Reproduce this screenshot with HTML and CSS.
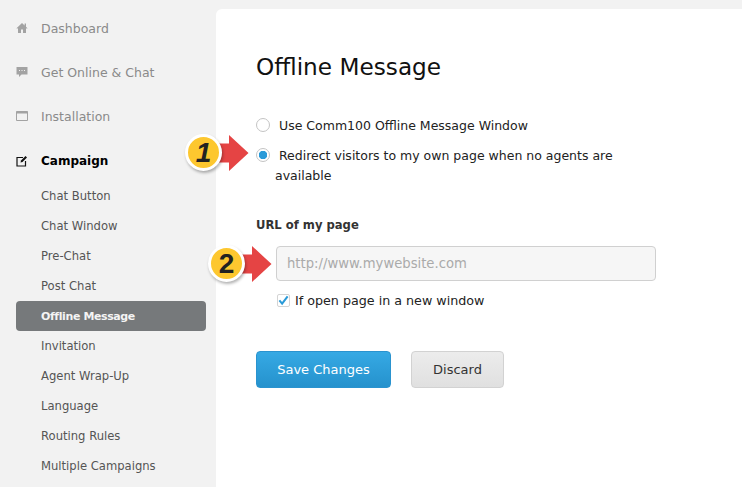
FILE: index.html
```html
<!DOCTYPE html>
<html lang="en">
  <head>
    <meta charset="UTF-8" />
    <meta name="viewport" content="width=device-width, initial-scale=1.0" />
    <title>Offline Message</title>
    <link rel="stylesheet" href="styles.css">
  </head>
  <body>
    <div class="page">
      <nav class="sidebar">
        <a class="nav-item">
          <svg class="nav-icon" viewBox="0 0 12 12"><path d="M6 1 0.5 6.2l.7.6L2 6.100V11h3V7.500h2V11h3V6.100l.8.7.7-.6L10 4.700V1.500H8.600v1.900z" fill="#a3a3a3"/></svg>
          Dashboard
        </a>
        <a class="nav-item">
          <svg class="nav-icon" viewBox="0 0 12 12"><path d="M.5 1h11v7.500H5.500L3 11V8.500H.5z" fill="#a3a3a3"/><path d="M3 4.500h1M5.500 4.500h1M8 4.500h1" stroke="#f2f2f2"/></svg>
          Get Online &amp; Chat
        </a>
        <a class="nav-item">
          <svg class="nav-icon" viewBox="0 0 12 12"><path d="M.5 1.500h11v9H.5z" fill="none" stroke="#a3a3a3"/><path d="M.5 1.500h11v2H.5z" fill="#a3a3a3"/></svg>
          Installation
        </a>
        <a class="nav-item nav-item-open">
          <svg class="nav-icon" viewBox="0 0 12 12"><path d="M7 2.500H1v8.500h8.500V6" fill="none" stroke="#111" stroke-width="1.200"/><path d="M4.500 7.500 5 5.500 9.500 1l1.500 1.500L6.500 7z" fill="#111"/></svg>
          Campaign
        </a>
        <div class="subnav">
          <a class="subnav-item">Chat Button</a>
          <a class="subnav-item">Chat Window</a>
          <a class="subnav-item">Pre-Chat</a>
          <a class="subnav-item">Post Chat</a>
          <a class="subnav-item active">Offline Message</a>
          <a class="subnav-item">Invitation</a>
          <a class="subnav-item">Agent Wrap-Up</a>
          <a class="subnav-item">Language</a>
          <a class="subnav-item">Routing Rules</a>
          <a class="subnav-item">Multiple Campaigns</a>
        </div>
      </nav>

      <main class="panel">
        <h1 class="title">Offline Message</h1>

        <div class="options">
          <div class="option">
            <span class="radio"></span>
            <span>Use Comm100 Offline Message Window</span>
          </div>
          <div class="option-wrap">
            <span class="radio radio-on"></span> Redirect visitors to my own page when no agents are available
          </div>
        </div>

        <div class="field-label">URL of my page</div>
        <div class="url-input">http://www.mywebsite.com</div>
        <div class="check-row">
          <span class="checkbox">
            <svg viewBox="0 0 12 12" width="12" height="12"><path d="M1.500 6.500 4.500 10 10.500 2" fill="none" stroke="#2a9ad8" stroke-width="2.200"/></svg>
          </span>
          If open page in a new window
        </div>

        <div class="actions">
          <button class="btn btn-save">Save Changes</button>
          <button class="btn btn-discard">Discard</button>
        </div>
      </main>

      <!-- numbered callouts pasted over the screenshot -->
      <div class="callout callout-1">
        <svg class="callout-arrow" viewBox="0 0 50 44" width="50" height="44"><path d="M2 12.500h26V4l19.500 18L28 40v-8.500H2z" fill="#e54444" stroke="#fff" stroke-width="4" stroke-linejoin="round" paint-order="stroke"/></svg>
        <span class="callout-num">1</span>
      </div>
      <div class="callout callout-2">
        <svg class="callout-arrow" viewBox="0 0 50 44" width="50" height="44"><path d="M2 12.500h26V4l19.500 18L28 40v-8.500H2z" fill="#e54444" stroke="#fff" stroke-width="4" stroke-linejoin="round" paint-order="stroke"/></svg>
        <span class="callout-num">2</span>
      </div>
    </div>
  </body>
</html>
```

FILE: styles.css
```css
*
{
  box-sizing: border-box;
}
html, body
{
  height: 100%;
}
body
{
  margin: 0;
  overflow: hidden;
  font-family: "DejaVu Sans", sans-serif;
  font-size: 12.500px;
  color: #222;
  background-color: #f2f2f2;
}
.page
{
  position: relative;
  display: flex;
  height: 487px;
}
.sidebar
{
  flex: 0 0 216px;
  padding: 6px 10px 0 16px;
}
.nav-item
{
  display: flex;
  align-items: center;
  height: 44px;
  color: #8a8a8a;
  font-size: 12.500px;
}
.nav-icon
{
  width: 12px;
  height: 12px;
  margin-right: 13px;
  flex: none;
}
.nav-item-open
{
  padding-top: 2px;
  color: #000;
  font-weight: bold;
  font-size: 12px;
}
.subnav
{
  display: flex;
  flex-direction: column;
  margin-top: -1px;
}
.subnav-item
{
  display: flex;
  align-items: center;
  height: 30px;
  padding-left: 25px;
  color: #555;
  font-size: 11.600px;
}
.subnav-item.active
{
  background-color: #76797b;
  border-radius: 4px;
  color: #f4f4f4;
  font-size: 11px;
  font-weight: bold;
  letter-spacing: -0.4px;
}
.panel
{
  flex: 1;
  margin-top: 9px;
  padding: 43px 40px 0;
  background-color: #fff;
  border-top-left-radius: 6px;
}
.title
{
  margin: 0;
  font-size: 23.200px;
  font-weight: normal;
  line-height: 30px;
  color: #111;
}
.options
{
  margin-top: 28px;
}
.option
{
  display: flex;
  align-items: center;
  height: 30px;
}
.option .radio
{
  margin-right: 9px;
}
.option-wrap
{
  width: 380px;
  margin-top: 6px;
  padding-left: 19px;
  line-height: 20px;
}
.option-wrap .radio
{
  margin: 0 5px 0 -19px;
  vertical-align: -2px;
}
.radio
{
  display: inline-block;
  flex: none;
  width: 14px;
  height: 14px;
  border: 1px solid #c4c4c4;
  border-radius: 50%;
  background-color: #fff;
}
.radio-on
{
  background: radial-gradient(circle, #2a9ad8 0 4px, #fff 4.500px);
}
.field-label
{
  margin-top: 32px;
  font-weight: bold;
  font-size: 11.600px;
  line-height: 14px;
  color: #333;
}
.url-input
{
  display: flex;
  align-items: center;
  width: 380px;
  height: 35px;
  margin: 14px 0 0 20px;
  padding-left: 10px;
  border: 1px solid #d0d0d0;
  border-radius: 4px;
  background-color: #f6f6f6;
  font-size: 13.200px;
  color: #aaa;
}
.check-row
{
  display: flex;
  align-items: center;
  margin: 10px 0 0 21px;
  height: 18px;
  font-size: 12.700px;
}
.checkbox
{
  display: flex;
  align-items: center;
  justify-content: center;
  width: 13px;
  height: 13px;
  margin-right: 5px;
  border: 1px solid #d4d4d4;
  border-radius: 2px;
}
.actions
{
  display: flex;
  gap: 20px;
  margin-top: 42px;
}
.btn
{
  height: 37px;
  border-radius: 4px;
  font-family: inherit;
  font-size: 13px;
}
.btn-save
{
  width: 135px;
  border: 1px solid #2a93cf;
  background: linear-gradient(#36a9e4, #2592cd);
  color: #fff;
}
.btn-discard
{
  width: 93px;
  border: 1px solid #d2d2d2;
  background: linear-gradient(#ececec, #e0e0e0);
  color: #333;
}
.callout
{
  position: absolute;
  width: 70px;
  height: 40px;
}
.callout-1
{
  left: 185px;
  top: 132px;
}
.callout-2
{
  left: 208px;
  top: 243px;
}
.callout-arrow
{
  position: absolute;
  left: 16px;
  top: -1px;
}
.callout-num
{
  position: absolute;
  left: 0;
  top: 2px;
  width: 37px;
  height: 37px;
  border: 3px solid #fff;
  border-radius: 50%;
  background-color: #fdc72f;
  box-shadow: 1px 2px 3px rgba(0, 0, 0, 0.3);
  font-family: "Liberation Sans", sans-serif;
  font-size: 28px;
  font-weight: bold;
  font-style: italic;
  line-height: 31px;
  text-align: center;
  color: #222;
}
.callout-2 .callout-num
{
  font-style: normal;
}
```
